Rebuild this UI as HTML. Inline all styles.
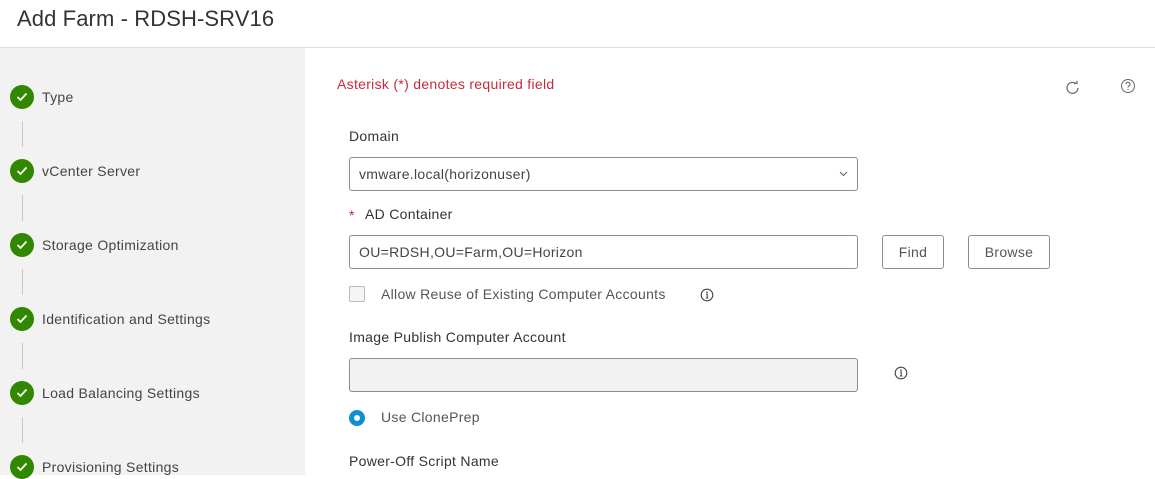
<!DOCTYPE html>
<html><head><meta charset="utf-8"><style>
*{box-sizing:border-box;margin:0;padding:0}
body{width:1155px;height:475px;overflow:hidden;background:#fff;font-family:"Liberation Sans",sans-serif;color:#333;position:relative;letter-spacing:0.3px}
.hdr{position:absolute;left:0;top:0;width:1155px;height:48px;border-bottom:1px solid #ddd;background:#fff}
.hdr h1{position:absolute;left:17px;top:6px;font-size:22px;font-weight:normal;color:#333;letter-spacing:0.1px}
.side{position:absolute;left:0;top:48px;width:305px;height:427px;background:#f2f2f2}
.step{position:absolute;left:10px;height:24px;display:flex;align-items:center}
.c{width:24px;height:24px;border-radius:50%;background:#318700;display:flex;align-items:center;justify-content:center}
.step span{margin-left:8px;font-size:14px;color:#444}
.ln{position:absolute;left:22px;width:1px;height:26px;background:#c8c8c8}
.a{position:absolute;font-size:14px}
.lbl{color:#333;font-size:14px}
.inp{position:absolute;border:1px solid #8c8c8c;border-radius:3px;background:#fff;font-size:14px;padding-left:9px;display:flex;align-items:center;color:#444}
.btn{position:absolute;border:1px solid #8c8c8c;border-radius:3px;background:#fff;font-size:14px;display:flex;align-items:center;justify-content:center;color:#555}
</style></head><body>
<div class="hdr"><h1>Add Farm - RDSH-SRV16</h1></div>
<div class="side">
<div class="step" style="top:37px"><div class="c"><svg width="12" height="10" viewBox="0 0 12 10"><path d="M1.5 5 L4.5 8 L10.5 1.5" stroke="#fff" stroke-width="1.8" fill="none"/></svg></div><span>Type</span></div>
<div class="ln" style="top:73px"></div>
<div class="step" style="top:111px"><div class="c"><svg width="12" height="10" viewBox="0 0 12 10"><path d="M1.5 5 L4.5 8 L10.5 1.5" stroke="#fff" stroke-width="1.8" fill="none"/></svg></div><span>vCenter Server</span></div>
<div class="ln" style="top:147px"></div>
<div class="step" style="top:185px"><div class="c"><svg width="12" height="10" viewBox="0 0 12 10"><path d="M1.5 5 L4.5 8 L10.5 1.5" stroke="#fff" stroke-width="1.8" fill="none"/></svg></div><span>Storage Optimization</span></div>
<div class="ln" style="top:221px"></div>
<div class="step" style="top:259px"><div class="c"><svg width="12" height="10" viewBox="0 0 12 10"><path d="M1.5 5 L4.5 8 L10.5 1.5" stroke="#fff" stroke-width="1.8" fill="none"/></svg></div><span>Identification and Settings</span></div>
<div class="ln" style="top:295px"></div>
<div class="step" style="top:333px"><div class="c"><svg width="12" height="10" viewBox="0 0 12 10"><path d="M1.5 5 L4.5 8 L10.5 1.5" stroke="#fff" stroke-width="1.8" fill="none"/></svg></div><span>Load Balancing Settings</span></div>
<div class="ln" style="top:369px"></div>
<div class="step" style="top:407px"><div class="c"><svg width="12" height="10" viewBox="0 0 12 10"><path d="M1.5 5 L4.5 8 L10.5 1.5" stroke="#fff" stroke-width="1.8" fill="none"/></svg></div><span>Provisioning Settings</span></div>
</div>

<div class="a" style="left:337px;top:76px;color:#c92a3a">Asterisk (*) denotes required field</div>
<svg style="position:absolute;left:1065px;top:80px" width="16" height="16" viewBox="0 0 16 16"><path d="M13 8 A5.5 5.5 0 1 1 11 3.6" stroke="#666" stroke-width="1.2" fill="none"/><path d="M9 3.8 L12.2 3.2 L11.8 0.8" stroke="#666" stroke-width="1.2" fill="none"/></svg>
<svg style="position:absolute;left:1120px;top:78px" width="16" height="16" viewBox="0 0 16 16"><circle cx="8" cy="8" r="6.5" stroke="#666" stroke-width="1" fill="none"/><path d="M6 6.3 A2 2 0 1 1 8.5 8.2 Q8 8.6 8 9.6" stroke="#666" stroke-width="1" fill="none"/><circle cx="8" cy="11.4" r="0.7" fill="#666"/></svg>

<div class="a lbl" style="left:349px;top:128px">Domain</div>
<div class="inp" style="left:349px;top:157px;width:509px;height:34px">vmware.local(horizonuser)
<svg style="position:absolute;right:9px;top:13px" width="9" height="6" viewBox="0 0 9 6"><path d="M1 1 L4.5 4.5 L8 1" stroke="#666" stroke-width="1.1" fill="none"/></svg></div>

<div class="a" style="left:349px;top:207px;color:#c92a3a">*</div>
<div class="a lbl" style="left:365px;top:206px">AD Container</div>
<div class="inp" style="left:349px;top:235px;width:509px;height:34px">OU=RDSH,OU=Farm,OU=Horizon</div>
<div class="btn" style="left:882px;top:235px;width:62px;height:34px">Find</div>
<div class="btn" style="left:968px;top:235px;width:82px;height:34px">Browse</div>

<div style="position:absolute;left:349px;top:286px;width:16px;height:16px;border:1px solid #bbb;border-radius:2px;background:#f5f5f5"></div>
<div class="a" style="left:381px;top:286px;color:#555">Allow Reuse of Existing Computer Accounts</div>
<svg style="position:absolute;left:700px;top:288px" width="14" height="14" viewBox="0 0 14 14"><circle cx="7" cy="7" r="5.8" stroke="#444" stroke-width="1.1" fill="none"/><path d="M6 6 H7.2 V10 M5.8 10 H8.4" stroke="#444" stroke-width="1.1" fill="none"/><circle cx="7" cy="4.2" r="0.8" fill="#444"/></svg>

<div class="a lbl" style="left:349px;top:329px">Image Publish Computer Account</div>
<div class="inp" style="left:349px;top:358px;width:509px;height:34px;background:#f2f2f2"></div>
<svg style="position:absolute;left:894px;top:366px" width="14" height="14" viewBox="0 0 14 14"><circle cx="7" cy="7" r="5.8" stroke="#444" stroke-width="1.1" fill="none"/><path d="M6 6 H7.2 V10 M5.8 10 H8.4" stroke="#444" stroke-width="1.1" fill="none"/><circle cx="7" cy="4.2" r="0.8" fill="#444"/></svg>

<div style="position:absolute;left:349px;top:410px;width:16px;height:16px;border-radius:50%;border:5px solid #0f8fd1;background:#fff"></div>
<div class="a" style="left:381px;top:409px;color:#555">Use ClonePrep</div>

<div class="a lbl" style="left:349px;top:453px">Power-Off Script Name</div>
</body></html>
